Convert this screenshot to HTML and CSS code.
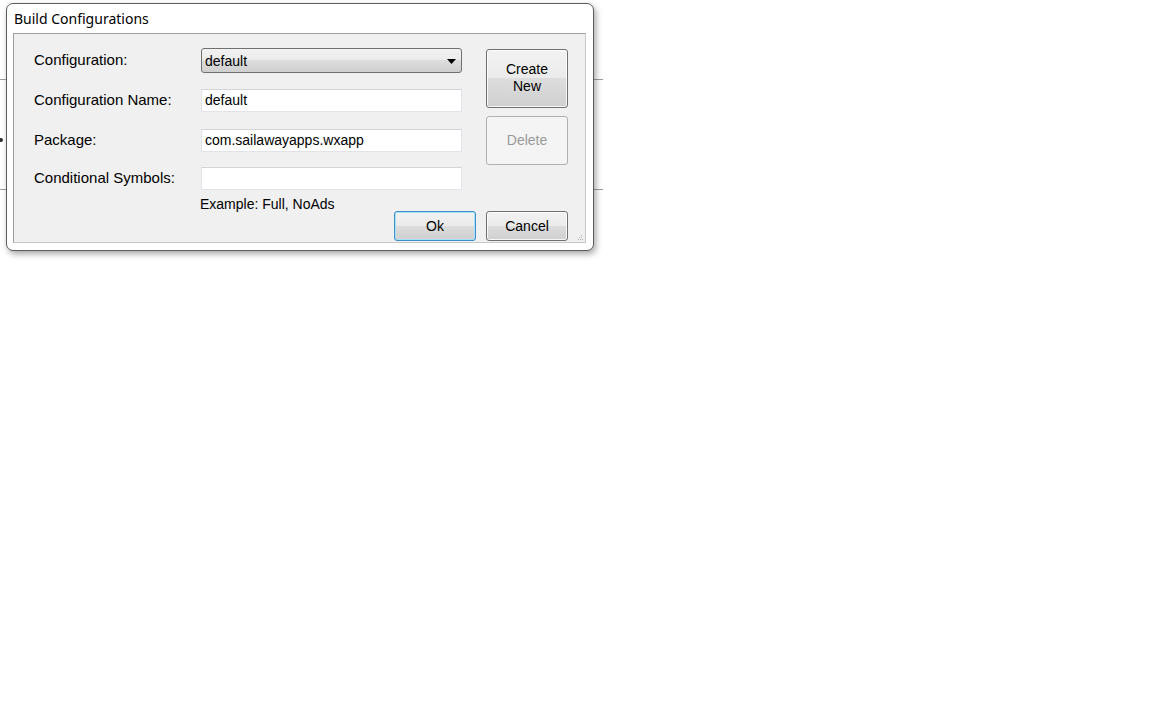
FILE: index.html
```html
<!DOCTYPE html>
<html>
<head>
<meta charset="utf-8">
<title>Build Configurations</title>
<link rel="stylesheet" href="styles.css">
</head>
<body>
<div class="page">
  <div class="rule rule-top"></div>
  <div class="mark"></div>
  <div class="rule rule-bottom"></div>

  <div class="dialog">
    <div class="titlebar">Build Configurations</div>
    <div class="panel">
      <div class="main">
        <div class="form">
          <div class="row row-1">
            <div class="label">Configuration:</div>
            <div class="combo">
              <span class="combo-text">default</span>
              <svg class="combo-arrow" width="9" height="5" viewBox="0 0 9 5"><path d="M0 0H9L4.5 5Z" fill="#000"/></svg>
            </div>
          </div>
          <div class="row row-2">
            <div class="label">Configuration Name:</div>
            <div class="input">default</div>
          </div>
          <div class="row row-3">
            <div class="label">Package:</div>
            <div class="input">com.sailawayapps.wxapp</div>
          </div>
          <div class="row row-4">
            <div class="label">Conditional Symbols:</div>
            <div class="input"></div>
          </div>
        </div>
        <div class="side">
          <div class="btn btn-create"><span>Create<br>New</span></div>
          <div class="btn btn-delete disabled"><span>Delete</span></div>
        </div>
      </div>
      <div class="foot">
        <div class="example">Example: Full, NoAds</div>
        <div class="actions">
          <div class="btn btn-ok"><span>Ok</span></div>
          <div class="btn btn-cancel"><span>Cancel</span></div>
        </div>
      </div>
      <svg class="grip" width="5" height="5" viewBox="0 0 5 5">
        <rect x="3" y="0" width="1" height="1" fill="#b5b5b5"/>
        <rect x="1" y="2" width="1" height="1" fill="#b5b5b5"/>
        <rect x="3" y="2" width="1" height="1" fill="#b5b5b5"/>
        <rect x="0" y="4" width="1" height="1" fill="#b5b5b5"/>
        <rect x="2" y="4" width="1" height="1" fill="#b5b5b5"/>
        <rect x="4" y="4" width="1" height="1" fill="#b5b5b5"/>
      </svg>
    </div>
  </div>
</div>
</body>
</html>
```

FILE: styles.css
```css
* { box-sizing: border-box; }

html, body {
  margin: 0;
  padding: 0;
  background: #ffffff;
  font-family: "Liberation Sans", Arial, sans-serif;
  color: #000;
}

.page {
  position: relative;
  width: 1152px;
  height: 720px;
  padding-top: 79px;
}

.rule {
  width: 603px;
  height: 1px;
  background: #a0a0a0;
}

.mark {
  width: 3px;
  height: 4px;
  margin-top: 58px;
  background: #333;
  border-radius: 0 2px 2px 0;
}

.rule-bottom {
  margin-top: 47px;
}

.dialog {
  position: absolute;
  left: 6px;
  top: 3px;
  width: 588px;
  height: 248px;
  background: #ffffff;
  border: 1px solid #5c5c5c;
  border-radius: 7px;
  padding: 0 7px 7px 6px;
  box-shadow: 2px 3px 6px rgba(0, 0, 0, 0.35);
}

.titlebar {
  height: 29px;
  line-height: 29px;
  padding-left: 1px;
  font-family: "Noto Sans", "Open Sans", sans-serif;
  font-size: 14px;
  color: #000;
  white-space: nowrap;
}

.panel {
  position: relative;
  width: 573px;
  height: 210px;
  background: #f0f0f0;
  border: 1px solid #a0a0a0;
  border-right-color: #c8c8c8;
  border-bottom-color: #c8c8c8;
  display: flex;
  flex-direction: column;
}

.main {
  display: flex;
  padding-top: 14px;
  padding-left: 20px;
}

.form {
  display: flex;
  flex-direction: column;
}

.row {
  display: flex;
  align-items: center;
}

.row-2 { margin-top: 16px; }
.row-3 { margin-top: 17px; }
.row-4 { margin-top: 15px; }

.label {
  width: 167px;
  font-size: 15px;
  line-height: 17px;
  padding-bottom: 3px;
  white-space: nowrap;
}

.combo {
  width: 261px;
  height: 25px;
  border: 1px solid #707070;
  border-radius: 3px;
  background: linear-gradient(#f2f2f2 0%, #ebebeb 50%, #dddddd 50%, #cfcfcf 100%);
  display: flex;
  align-items: center;
  justify-content: space-between;
  padding: 0 5px 0 3px;
  font-size: 14px;
}

.combo-arrow {
  display: block;
  margin-top: 1px;
}

.input {
  width: 261px;
  height: 23px;
  background: #ffffff;
  border: 1px solid #e2e3e8;
  border-top-color: #d2d4d9;
  padding: 0 3px;
  font-size: 14px;
  line-height: 21px;
  white-space: nowrap;
}

.side {
  margin-left: 24px;
  margin-top: 1px;
  display: flex;
  flex-direction: column;
  width: 82px;
}

.btn {
  width: 82px;
  border: 1px solid #707070;
  border-radius: 3px;
  background: linear-gradient(#f2f2f2 0%, #ebebeb 50%, #dddddd 50%, #cfcfcf 100%);
  box-shadow: inset 0 0 0 1px rgba(255, 255, 255, 0.8);
  display: flex;
  align-items: center;
  justify-content: center;
  text-align: center;
  font-size: 14px;
  line-height: 17px;
}

.btn-create { height: 59px; padding-bottom: 2px; }

.btn-delete {
  height: 49px;
  margin-top: 8px;
}

.btn.disabled {
  background: #f4f4f4;
  border-color: #adb2b5;
  color: #9a9a9a;
  box-shadow: none;
}

.foot {
  display: flex;
  align-items: flex-start;
}

.example {
  margin-left: 186px;
  margin-top: 6px;
  font-size: 14px;
  line-height: 16px;
  white-space: nowrap;
}

.actions {
  margin-left: auto;
  margin-right: 17px;
  margin-top: 21px;
  display: flex;
  gap: 10px;
}

.btn-ok, .btn-cancel { height: 30px; }

.btn-ok {
  border-color: #3c8fcb;
  box-shadow: inset 0 0 0 1px #a8e2f8;
}

.grip {
  position: absolute;
  right: 2px;
  bottom: 2px;
  display: block;
}
```
